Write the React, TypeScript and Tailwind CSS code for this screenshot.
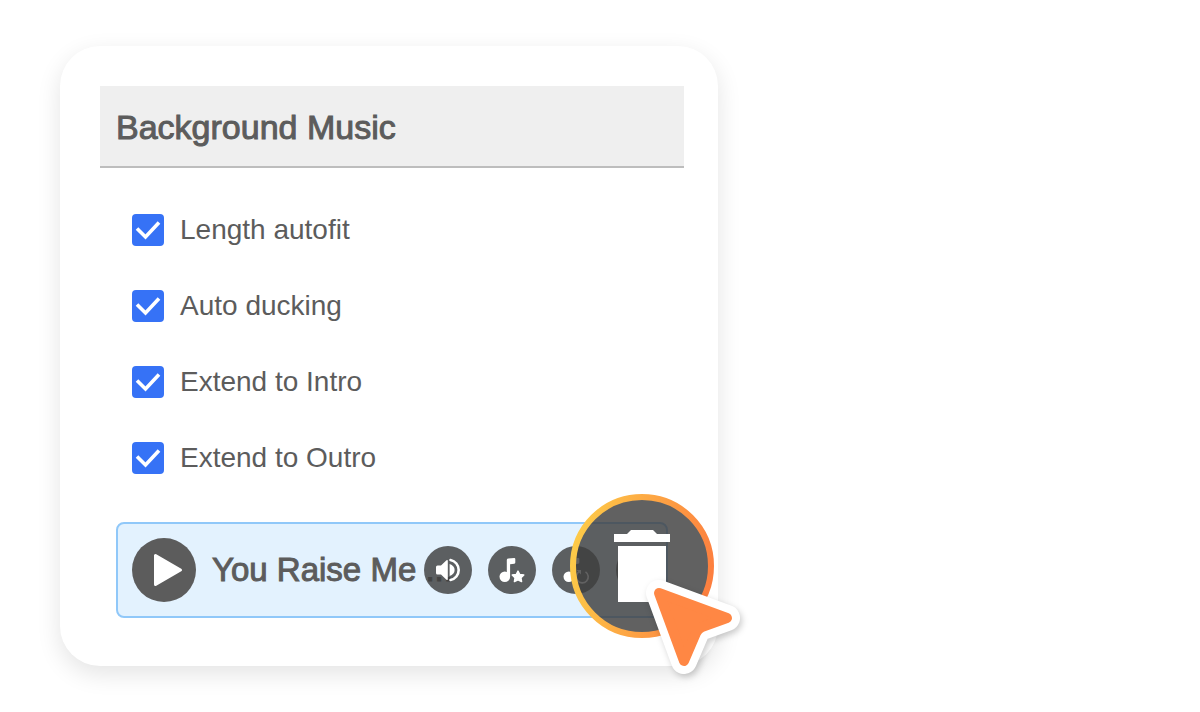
import React from 'react';

const options = ['Length autofit', 'Auto ducking', 'Extend to Intro', 'Extend to Outro'];

const CheckOption = ({ label }: { label: string }) => (
  <label className="flex w-fit items-center gap-4 text-[28px] leading-8">
    <span className="relative size-8 shrink-0">
      <input
        type="checkbox"
        defaultChecked
        className="peer block size-8 appearance-none rounded border-2 border-[#5c5c5c] checked:border-0 checked:bg-[#3672f6]"
      />
      <svg
        viewBox="0 0 32 32"
        className="pointer-events-none absolute inset-0 hidden peer-checked:block"
        fill="none"
        stroke="white"
        strokeWidth="3.6"
      >
        <path d="M5 14.5 L13.5 23 L27 8.5" />
      </svg>
    </span>
    {label}
  </label>
);

const IconButton = ({ label, children }: { label: string; children: React.ReactNode }) => (
  <button
    type="button"
    aria-label={label}
    className="relative flex size-12 shrink-0 items-center justify-center rounded-full bg-[#3e3e3e]/82 text-white"
  >
    {children}
  </button>
);

const Note = () => (
  <>
    <circle cx="8.8" cy="22.7" r="5.3" />
    <path d="M10.8 6 Q10.8 4.8 12 4.6 L18.2 4 Q19.3 4 19.3 5 V8.6 Q19.3 9.6 18.3 9.7 L14.1 10.2 V22.7 H10.8 Z" />
  </>
);

const App = () => {
  return (
    <main className="min-h-screen bg-white px-[60px] py-[46px] font-['Liberation_Sans',Arial,sans-serif] text-[#5c5c5c]">
      <section className="w-full max-w-[658px] rounded-[40px] bg-white pt-10 pr-[34px] pb-12 pl-10 shadow-[0_8px_24px_rgba(0,0,0,0.11)]">
        <h1 className="border-b-2 border-[#bdbdbd] bg-[#efefef] px-4 pt-[21px] pb-[19px] text-[34px] leading-10 [-webkit-text-stroke:1px_#5c5c5c]">
          Background Music
        </h1>

        <div className="flex flex-col gap-11 px-8 pt-[46px] pb-12">
          {options.map((o) => (
            <CheckOption key={o} label={o} />
          ))}
        </div>

        {/* track row */}
        <div className="relative mx-4 flex items-center gap-4 rounded-lg border-2 border-[#90c8f9] bg-[#e3f2fe] py-[14px] pr-[2px] pl-[14px]">
          <button type="button" aria-label="Play" className="size-16 shrink-0 rounded-full bg-[#5c5c5c]">
            <svg viewBox="0 0 64 64" fill="white" stroke="white" strokeWidth="3" strokeLinejoin="round">
              <path d="M23.5 17.5 V46.5 L48.5 32 Z" />
            </svg>
          </button>
          <div className="-mr-4 min-w-0 flex-1 text-[33px] leading-10 whitespace-nowrap [-webkit-text-stroke:1px_#5c5c5c]">
            You Raise Me ...
          </div>
          <IconButton label="Volume">
            <svg viewBox="0 0 32 32" className="size-8" fill="currentColor">
              <path d="M4 13 Q4 11.5 5.5 11.5 H9 L14.5 6.3 Q15.8 5.5 15.8 7 V25 Q15.8 26.5 14.5 25.7 L9 20.5 H5.5 Q4 20.5 4 19 Z" />
              <path d="M17.6 10 Q22.6 11.8 22.6 16 T17.6 22 Z" />
              <path
                d="M18.5 6 A10.2 10.2 0 0 1 18.5 26"
                fill="none"
                stroke="currentColor"
                strokeWidth="2.6"
                strokeLinecap="round"
              />
            </svg>
          </IconButton>
          <IconButton label="Favorite music">
            <svg viewBox="0 0 32 32" className="size-8" fill="currentColor">
              <Note />
              <path
                d="M22 17 L23.8 20.5 L27.8 21 L25 23.8 L25.6 27.6 L22 25.8 L18.4 27.6 L19 23.8 L16.2 21 L20.2 20.5 Z"
                stroke="currentColor"
                strokeWidth="1.4"
                strokeLinejoin="round"
              />
            </svg>
          </IconButton>
          <IconButton label="Replace music">
            <svg viewBox="0 0 32 32" className="size-8" fill="currentColor">
              <Note />
              <path d="M19.5 17.5 A6 6 0 1 0 25.5 17.8" fill="none" stroke="currentColor" strokeWidth="1.6" />
              <path d="M16.5 16 H21 V20.5 Z" />
            </svg>
          </IconButton>
          <IconButton label="Delete">
            <svg viewBox="0 0 24 24" className="size-7" fill="currentColor">
              <path d="M6 19h12V7H6zM19 4h-3.5l-1-1h-5l-1 1H5v2h14z" />
            </svg>
          </IconButton>

          {/* magnified delete button with the pointer on it */}
          <div className="absolute -top-[30px] -right-12 size-36">
            <button type="button" aria-label="Delete track" className="block size-36 rounded-full">
              <svg viewBox="0 0 144 144" fill="none">
                <defs>
                  <linearGradient id="ring" x1="0" y1="0.4" x2="1" y2="0.6">
                    <stop offset="0" stopColor="#fdca48" />
                    <stop offset="1" stopColor="#fd7f3f" />
                  </linearGradient>
                </defs>
                <circle cx="72" cy="72" r="67" fill="#3e3e3e" fillOpacity="0.82" />
                <circle cx="72" cy="72" r="69" stroke="url(#ring)" strokeWidth="6" />
                <path d="M44 40 H57 L61 36 H83 L87 40 H100 V48 H44 Z M48 52 H96 V108 H48 Z" fill="white" />
              </svg>
            </button>
            <svg
              viewBox="0 0 144 144"
              className="pointer-events-none absolute inset-0 overflow-visible drop-shadow-[2px_3px_3px_rgba(0,0,0,0.2)]"
              strokeLinejoin="round"
            >
              <path d="M89 99 L157 124 L132 133 Q128 135 126 139 L114 167 Z" fill="white" stroke="white" strokeWidth="26" />
              <path d="M89 99 L157 124 L132 133 Q128 135 126 139 L114 167 Z" fill="#ff8744" stroke="#ff8744" strokeWidth="10" />
            </svg>
          </div>
        </div>
      </section>
    </main>
  );
};

export default App;
